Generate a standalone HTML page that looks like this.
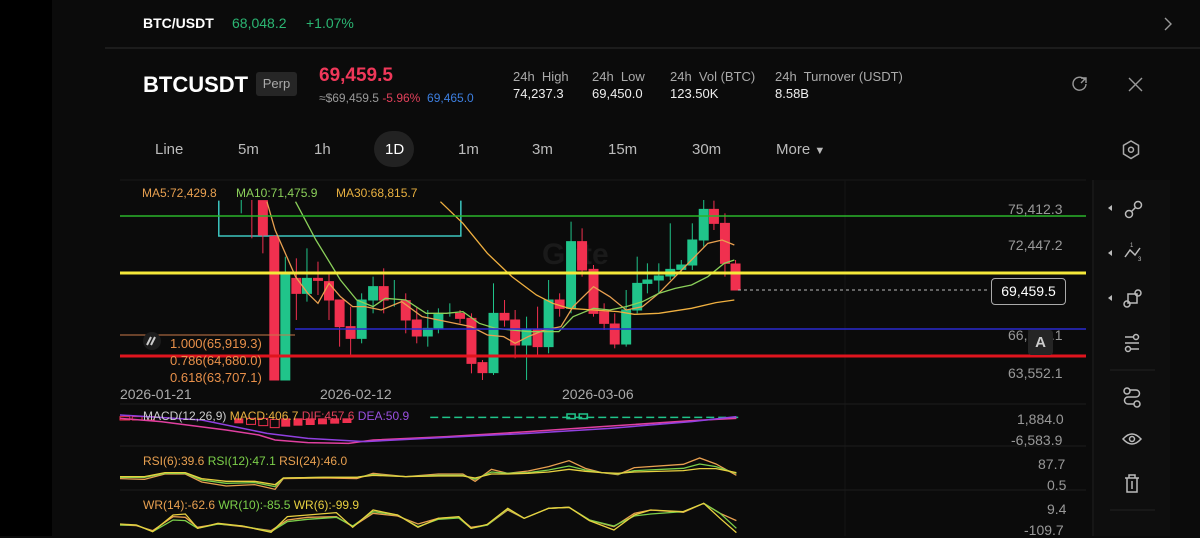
<!DOCTYPE html>
<html><head><meta charset="utf-8"><style>
*{margin:0;padding:0;box-sizing:border-box}
body{width:1200px;height:536px;background:#0b0b0b;font-family:"Liberation Sans",sans-serif;overflow:hidden;position:relative;color:#ddd}
.t{position:absolute;white-space:nowrap}
svg *{vector-effect:non-scaling-stroke}
</style></head><body>
<div style="position:absolute;left:0;top:0;width:52px;height:536px;background:#000"></div>
<div style="position:absolute;left:105px;top:47px;width:1095px;height:2px;background:#1c1c1c"></div>
<div class="t" style="left:143px;top:15px;font-size:14px;color:#fff;font-weight:bold">BTC/USDT</div>
<div class="t" style="left:232px;top:15px;font-size:14px;color:#2bb673">68,048.2</div>
<div class="t" style="left:306px;top:15px;font-size:14px;color:#2bb673">+1.07%</div>
<svg style="position:absolute;left:1162px;top:16px" width="12" height="16"><path d="M3 2l6 6-6 6" stroke="#999" stroke-width="1.4" fill="none"/></svg>

<div class="t" style="left:143px;top:72px;font-size:22px;color:#fff;font-weight:bold">BTCUSDT</div>
<div class="t" style="left:256px;top:72px;width:41px;height:24px;background:#262626;border-radius:3px;font-size:13px;color:#aaa;text-align:center;line-height:24px">Perp</div>
<div class="t" style="left:319px;top:65px;font-size:19px;color:#f0385a;font-weight:bold">69,459.5</div>
<div class="t" style="left:319px;top:91px;font-size:12px;color:#999">≈$69,459.5 <span style="color:#e0405a">-5.96%</span> <span style="color:#3d7fe0">&nbsp;69,465.0</span></div>
<div class="t" style="left:513px;top:69px;font-size:13px;color:#aaa">24h&nbsp; High</div>
<div class="t" style="left:513px;top:86px;font-size:13px;color:#eee">74,237.3</div>
<div class="t" style="left:592px;top:69px;font-size:13px;color:#aaa">24h&nbsp; Low</div>
<div class="t" style="left:592px;top:86px;font-size:13px;color:#eee">69,450.0</div>
<div class="t" style="left:670px;top:69px;font-size:13px;color:#aaa">24h&nbsp; Vol (BTC)</div>
<div class="t" style="left:670px;top:86px;font-size:13px;color:#eee">123.50K</div>
<div class="t" style="left:775px;top:69px;font-size:13px;color:#aaa">24h&nbsp; Turnover (USDT)</div>
<div class="t" style="left:775px;top:86px;font-size:13px;color:#eee">8.58B</div>
<svg style="position:absolute;left:1071px;top:75px" width="18" height="18"><path d="M13 4A6.5 6.5 0 1 0 15 9" stroke="#999" stroke-width="1.4" fill="none"/><path d="M10 3h5v5M15 3l-5 5" stroke="#999" stroke-width="1.4" fill="none"/></svg>
<svg style="position:absolute;left:1128px;top:77px" width="15" height="15"><path d="M1 1l13 13M14 1L1 14" stroke="#999" stroke-width="1.4"/></svg>

<div style="position:absolute;left:374px;top:131px;width:40px;height:36px;border-radius:18px;background:#222"></div>
<div class="t" style="left:155px;top:141px;font-size:15px;color:#bbb">Line</div>
<div class="t" style="left:238px;top:141px;font-size:15px;color:#bbb">5m</div>
<div class="t" style="left:314px;top:141px;font-size:15px;color:#bbb">1h</div>
<div class="t" style="left:385px;top:141px;font-size:15px;color:#fff">1D</div>
<div class="t" style="left:458px;top:141px;font-size:15px;color:#bbb">1m</div>
<div class="t" style="left:532px;top:141px;font-size:15px;color:#bbb">3m</div>
<div class="t" style="left:608px;top:141px;font-size:15px;color:#bbb">15m</div>
<div class="t" style="left:692px;top:141px;font-size:15px;color:#bbb">30m</div>
<div class="t" style="left:776px;top:141px;font-size:15px;color:#bbb">More <span style="font-size:11px">▼</span></div>
<svg style="position:absolute;left:1122px;top:140px" width="18" height="20"><path d="M9 1l7.5 4.3v8.6L9 18.5 1.5 13.9V5.3z" stroke="#aaa" stroke-width="1.5" fill="none"/><circle cx="9" cy="9.7" r="2.5" stroke="#aaa" stroke-width="1.5" fill="none"/></svg>

<svg style="position:absolute;left:0;top:0" width="1200" height="536">
<line x1="120" y1="180" x2="1086" y2="180" stroke="#1a1a1a"/>
<line x1="1093" y1="180" x2="1093" y2="536" stroke="#222"/>
<line x1="845" y1="180" x2="845" y2="536" stroke="#141414"/>
<line x1="120" y1="404" x2="1086" y2="404" stroke="#1c1c1c"/>
<line x1="120" y1="446" x2="1086" y2="446" stroke="#1c1c1c"/>
<line x1="120" y1="490" x2="1086" y2="490" stroke="#1c1c1c"/>
<rect x="1094" y="180" width="76" height="356" fill="#0e0e0e"/>
<line x1="1110" y1="370" x2="1155" y2="370" stroke="#222"/>
<line x1="1110" y1="510" x2="1155" y2="510" stroke="#222"/>
<text x="542" y="264" font-size="30" font-weight="bold" fill="#1a1a1a" font-family="Liberation Sans">Gate</text>
<g transform="translate(120,180) scale(0.4082,0.3333)">
<polyline points="242,62 242,168 835,168 835,62" stroke="#3cc6c0" stroke-width="1.5" fill="none"/>
<g stroke-width="1">
<line x1="297" y1="60" x2="297" y2="100" stroke="#20c48a"/>
<line x1="323" y1="60" x2="323" y2="175" stroke="#f0304f"/>
</g>
<g stroke-width="1">
<g stroke="#f0304f" fill="#f0304f">
<line x1="350" y1="62" x2="350" y2="220"/><rect x="339" y="62" width="22" height="103"/>
<line x1="378" y1="165" x2="378" y2="600"/><rect x="367" y="170" width="22" height="430"/>
<line x1="432" y1="235" x2="432" y2="420"/><rect x="421" y="295" width="22" height="45"/>
<line x1="485" y1="245" x2="485" y2="345"/><rect x="474" y="295" width="22" height="6"/>
<line x1="512" y1="280" x2="512" y2="420"/><rect x="501" y="305" width="22" height="55"/>
<line x1="538" y1="360" x2="538" y2="500"/><rect x="527" y="360" width="22" height="80"/>
<line x1="565" y1="380" x2="565" y2="525"/><rect x="554" y="440" width="22" height="35"/>
<line x1="646" y1="265" x2="646" y2="400"/><rect x="635" y="320" width="22" height="40"/>
<line x1="700" y1="340" x2="700" y2="460"/><rect x="689" y="362" width="22" height="58"/>
<line x1="727" y1="380" x2="727" y2="490"/><rect x="716" y="420" width="22" height="48"/>
<line x1="833" y1="390" x2="833" y2="430"/><rect x="822" y="400" width="22" height="15"/>
<line x1="861" y1="400" x2="861" y2="580"/><rect x="850" y="415" width="22" height="135"/>
<line x1="888" y1="540" x2="888" y2="600"/><rect x="877" y="548" width="22" height="30"/>
<line x1="942" y1="360" x2="942" y2="440"/><rect x="931" y="400" width="22" height="20"/>
<line x1="968" y1="390" x2="968" y2="535"/><rect x="957" y="420" width="22" height="75"/>
<line x1="1023" y1="380" x2="1023" y2="525"/><rect x="1012" y="450" width="22" height="50"/>
<line x1="1077" y1="340" x2="1077" y2="410"/><rect x="1066" y="360" width="22" height="25"/>
<line x1="1132" y1="145" x2="1132" y2="290"/><rect x="1121" y="185" width="22" height="85"/>
<line x1="1160" y1="255" x2="1160" y2="410"/><rect x="1149" y="268" width="22" height="132"/>
<line x1="1186" y1="370" x2="1186" y2="450"/><rect x="1175" y="395" width="22" height="35"/>
<line x1="1212" y1="400" x2="1212" y2="505"/><rect x="1201" y="432" width="22" height="60"/>
<line x1="1455" y1="62" x2="1455" y2="150"/><rect x="1444" y="88" width="22" height="42"/>
<line x1="1482" y1="100" x2="1482" y2="290"/><rect x="1471" y="130" width="22" height="120"/>
<line x1="1508" y1="240" x2="1508" y2="330"/><rect x="1497" y="252" width="22" height="78"/>
</g>
<g stroke="#20c48a" fill="#20c48a">
<line x1="405" y1="230" x2="405" y2="600"/><rect x="394" y="280" width="22" height="320"/>
<line x1="458" y1="205" x2="458" y2="365"/><rect x="447" y="295" width="22" height="45"/>
<line x1="592" y1="340" x2="592" y2="490"/><rect x="581" y="360" width="22" height="115"/>
<line x1="620" y1="290" x2="620" y2="400"/><rect x="609" y="320" width="22" height="40"/>
<line x1="672" y1="300" x2="672" y2="380"/>
<line x1="754" y1="390" x2="754" y2="500"/><rect x="743" y="445" width="22" height="23"/>
<line x1="780" y1="385" x2="780" y2="460"/><rect x="769" y="400" width="22" height="45"/>
<line x1="808" y1="370" x2="808" y2="410"/>
<line x1="915" y1="310" x2="915" y2="585"/><rect x="904" y="400" width="22" height="178"/>
<line x1="996" y1="410" x2="996" y2="600"/><rect x="985" y="450" width="22" height="45"/>
<line x1="1050" y1="300" x2="1050" y2="520"/><rect x="1039" y="360" width="22" height="140"/>
<line x1="1105" y1="125" x2="1105" y2="400"/><rect x="1094" y="185" width="22" height="200"/>
<line x1="1240" y1="330" x2="1240" y2="500"/><rect x="1229" y="390" width="22" height="102"/>
<line x1="1267" y1="230" x2="1267" y2="400"/><rect x="1256" y="310" width="22" height="80"/>
<line x1="1292" y1="250" x2="1292" y2="340"/><rect x="1281" y="300" width="22" height="10"/>
<line x1="1320" y1="250" x2="1320" y2="340"/><rect x="1309" y="288" width="22" height="12"/>
<line x1="1348" y1="130" x2="1348" y2="300"/><rect x="1337" y="268" width="22" height="20"/>
<line x1="1375" y1="240" x2="1375" y2="280"/><rect x="1364" y="255" width="22" height="13"/>
<line x1="1402" y1="130" x2="1402" y2="270"/><rect x="1391" y="180" width="22" height="75"/>
<line x1="1430" y1="60" x2="1430" y2="200"/><rect x="1419" y="88" width="22" height="92"/>
</g>
</g>
<polyline fill="none" stroke="#e8a050" stroke-width="1.3" points="360,65 380,150 430,290 460,340 485,370 512,310 540,350 570,380 600,380 640,390 690,365 740,410 800,425 860,440 900,465 940,470 968,490 1000,470 1040,450 1080,440 1110,380 1160,320 1200,350 1240,390 1280,380 1320,340 1360,290 1400,240 1440,190 1475,180 1505,195"/>
<polyline fill="none" stroke="#8bd05a" stroke-width="1.3" points="430,65 480,180 540,300 580,360 620,380 650,355 700,360 750,400 800,400 840,395 880,430 920,445 960,450 1000,455 1075,455 1110,410 1160,385 1200,390 1240,380 1280,365 1320,340 1360,325 1400,315 1440,290 1480,250 1505,240"/>
<polyline fill="none" stroke="#f0b040" stroke-width="1.3" points="785,65 840,130 900,220 960,290 1020,345 1060,370 1100,385 1160,390 1220,395 1260,403 1320,400 1400,385 1460,368 1505,360"/>
</g>
<line x1="120" y1="216" x2="1086" y2="216" stroke="#2bb52b" stroke-width="1.5"/>
<line x1="120" y1="273" x2="1086" y2="273" stroke="#f5e93a" stroke-width="3"/>
<line x1="295" y1="329" x2="1086" y2="329" stroke="#2a2ad0" stroke-width="1.5"/>
<line x1="120" y1="335" x2="295" y2="335" stroke="#c8784a" stroke-width="1"/>
<line x1="120" y1="356" x2="1086" y2="356" stroke="#e0141e" stroke-width="3"/>
<line x1="738" y1="290" x2="990" y2="290" stroke="#bbb" stroke-dasharray="3,3"/>
<circle cx="152" cy="341" r="9" fill="#1c1c1c"/>
<path d="M147 345l4-8M151 345l4-8" stroke="#ccc" stroke-width="2"/>
<g transform="translate(120,400) scale(0.4082,0.3333)" fill="none">
<g stroke="#f0304f" stroke-width="1"><rect x="0" y="50" width="24" height="10"/><rect x="30" y="50" width="24" height="10"/><rect x="60" y="50" width="24" height="10"/></g>
<g fill="#f0304f"><rect x="280" y="55" width="22" height="15"/><rect x="395" y="55" width="22" height="25"/><rect x="425" y="55" width="22" height="22"/><rect x="455" y="55" width="22" height="20"/><rect x="485" y="55" width="22" height="18"/><rect x="515" y="55" width="22" height="16"/><rect x="545" y="55" width="22" height="14"/></g>
<g stroke="#f0304f" stroke-width="1"><rect x="310" y="55" width="22" height="18"/><rect x="340" y="55" width="22" height="22"/><rect x="368" y="58" width="22" height="25"/></g>
<g stroke="#20c48a" stroke-width="1.5"><line x1="760" y1="52" x2="1520" y2="52" stroke-dasharray="8,4"/><rect x="1095" y="42" width="20" height="14"/><rect x="1125" y="42" width="20" height="14"/></g>
<polyline stroke="#e040a0" stroke-width="1.5" points="0,55 100,65 260,90 340,105 380,120 460,128 560,130 620,120 800,110 1000,95 1180,80 1400,62 1510,55"/>
<polyline stroke="#9040e0" stroke-width="1.5" points="0,45 200,60 360,100 460,115 600,125 800,112 1000,100 1200,85 1400,65 1510,50"/>
<polyline stroke="#e8a050" stroke-width="1.3" points="0,236 60,238 110,222 160,222 200,246 260,258 330,254 380,268 400,236 500,234 580,236 620,220 700,230 780,222 840,222 870,244 910,208 950,220 1000,213 1050,200 1100,182 1140,205 1180,218 1220,224 1260,203 1380,193 1420,174 1460,192 1510,226"/>
<polyline stroke="#7cd04a" stroke-width="1.3" points="0,232 60,232 110,220 160,220 200,240 260,250 330,248 380,260 400,234 500,232 580,232 620,224 700,230 780,226 840,226 870,238 910,216 950,220 1000,218 1050,210 1100,198 1140,210 1180,218 1220,222 1260,212 1380,205 1420,192 1460,200 1510,220"/>
<polyline stroke="#e8d040" stroke-width="1.3" points="0,230 60,230 110,218 160,218 200,236 260,244 330,244 380,254 400,234 500,232 580,232 620,226 700,230 780,228 840,228 870,234 910,222 950,222 1000,220 1050,216 1100,208 1140,214 1180,218 1220,220 1260,216 1380,212 1420,206 1460,206 1510,218"/>
<polyline stroke="#e8a050" stroke-width="1.3" points="0,375 40,377 80,392 130,350 160,352 190,382 240,372 300,380 370,392 410,360 460,352 530,350 570,380 620,340 680,348 730,372 780,355 830,352 860,382 900,375 950,330 990,355 1050,325 1100,322 1150,360 1210,380 1260,340 1300,330 1380,337 1430,310 1470,340 1510,362"/>
<polyline stroke="#7cd04a" stroke-width="1.3" points="0,375 40,375 80,395 130,360 160,362 190,385 240,372 300,378 370,395 410,365 460,358 530,352 570,378 620,335 680,345 730,380 780,358 830,354 860,385 900,375 950,327 990,355 1050,325 1100,322 1150,360 1210,378 1260,348 1300,342 1380,335 1430,310 1470,340 1510,385"/>
<polyline stroke="#e8d040" stroke-width="1.3" points="0,372 40,375 80,395 130,345 160,342 190,385 240,370 300,378 370,397 410,350 460,345 530,338 570,382 620,330 680,345 730,382 780,355 830,350 860,385 900,373 950,325 990,355 1050,325 1100,322 1150,362 1210,390 1260,345 1300,330 1380,335 1430,310 1470,355 1510,398"/>
</g>
</svg>
<div style="position:absolute;left:991px;top:278px;width:75px;height:27px;border:1px solid #aaa;border-radius:4px;background:#0b0b0b;color:#fff;font-size:14px;text-align:center;line-height:25px">69,459.5</div>
<div class="t" style="left:142px;top:186px;font-size:12px;color:#e8a050">MA5:72,429.8</div>
<div class="t" style="left:236px;top:186px;font-size:12px;color:#8bd05a">MA10:71,475.9</div>
<div class="t" style="left:336px;top:186px;font-size:12px;color:#e8b040">MA30:68,815.7</div>
<div class="t" style="left:170px;top:335px;font-size:13px;color:#e8904a;line-height:17px">1.000(65,919.3)<br>0.786(64,680.0)<br>0.618(63,707.1)</div>
<div class="t" style="left:120px;top:386px;font-size:14px;color:#aaa">2026-01-21</div>
<div class="t" style="left:320px;top:386px;font-size:14px;color:#aaa">2026-02-12</div>
<div class="t" style="left:562px;top:386px;font-size:14px;color:#aaa">2026-03-06</div>
<div class="t" style="left:1008px;top:201px;font-size:14px;color:#999">75,412.3</div>
<div class="t" style="left:1008px;top:237px;font-size:14px;color:#999">72,447.2</div>
<div class="t" style="left:1008px;top:327px;font-size:14px;color:#999">66,517.1</div>
<div class="t" style="left:1008px;top:365px;font-size:14px;color:#999">63,552.1</div>
<div style="position:absolute;left:1028px;top:330px;width:25px;height:25px;background:#252525;border-radius:3px;color:#ccc;font-size:15px;font-weight:bold;text-align:center;line-height:25px">A</div>
<div class="t" style="left:1017px;top:411px;font-size:14px;color:#999">1,884.0</div>
<div class="t" style="left:1011px;top:432px;font-size:14px;color:#999">-6,583.9</div>
<div class="t" style="left:1038px;top:456px;font-size:14px;color:#999">87.7</div>
<div class="t" style="left:1047px;top:477px;font-size:14px;color:#999">0.5</div>
<div class="t" style="left:1047px;top:501px;font-size:14px;color:#999">9.4</div>
<div class="t" style="left:1024px;top:522px;font-size:14px;color:#999">-109.7</div>
<div class="t" style="left:143px;top:409px;font-size:12px;color:#ccc">MACD(12,26,9) <span style="color:#e8b040">MACD:406.7</span> <span style="color:#e0405a">DIF:457.6</span> <span style="color:#9a50e0">DEA:50.9</span></div>
<div class="t" style="left:143px;top:454px;font-size:12px;color:#e8a050">RSI(6):39.6 <span style="color:#7cd04a">RSI(12):47.1</span> RSI(24):46.0</div>
<div class="t" style="left:143px;top:498px;font-size:12px;color:#e8a050">WR(14):-62.6 <span style="color:#7cd04a">WR(10):-85.5</span> <span style="color:#e8d040">WR(6):-99.9</span></div>
<svg style="position:absolute;left:1100px;top:195px" width="60" height="300" fill="none" stroke="#bbb" stroke-width="1.5">
<path d="M8 13l4-3v6z" fill="#bbb" stroke="none"/>
<circle cx="29" cy="19" r="3.5"/><circle cx="38" cy="10" r="3.5"/><path d="M31.5 16.5l4-4"/>
<path d="M8 58l4-3v6z" fill="#bbb" stroke="none"/>
<path d="M25 62l5-7 5 5 5-7"/><text x="30" y="52" font-size="6" fill="#bbb" stroke="none">1</text><text x="38" y="66" font-size="6" fill="#bbb" stroke="none">3</text>
<path d="M8 103l4-3v6z" fill="#bbb" stroke="none"/>
<path d="M28 99h9v9h-9z"/><circle cx="27" cy="109" r="3"/><circle cx="38" cy="98" r="3"/>
<path d="M25 142h14M25 148h14M25 154h14"/><circle cx="36" cy="142" r="2.5" fill="#0e0e0e"/><circle cx="28" cy="154" r="2.5" fill="#0e0e0e"/>
<path d="M30 195h6a3.5 3.5 0 0 1 0 7h-8a3.5 3.5 0 0 0 0 7h6"/><circle cx="27" cy="196" r="3"/><circle cx="37" cy="209" r="3"/>
<path d="M23 244q9-10 18 0q-9 10-18 0z"/><circle cx="32" cy="244" r="2.5"/>
<path d="M25 283h14M29 283v-3h6v3M27 283v14h10v-14M32 286v8"/>
</svg>
</body></html>
